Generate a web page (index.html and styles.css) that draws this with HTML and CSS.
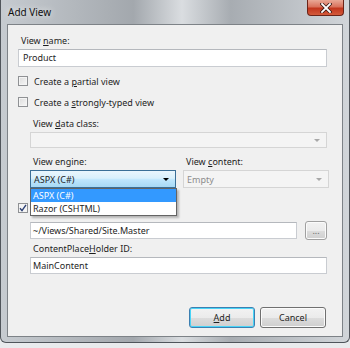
FILE: index.html
```html
<!DOCTYPE html>
<html lang="en">
<head>
    <meta charset="UTF-8">
    <meta name="viewport" content="width=device-width, initial-scale=1.0">
    <title>Add View</title>
    <link rel="stylesheet" href="styles.css">
</head>
<body>
    <div id="window">
        <div id="title-bar">
            <span id="title-text">Add View</span>
            <button id="close-button" aria-label="Close">
                <svg width="12" height="10" viewBox="0 0 12 10">
                    <path d="M2 1 L10 9 M10 1 L2 9" stroke="#3a1a14" stroke-width="3.4" stroke-linecap="square"/>
                    <path d="M2 1 L10 9 M10 1 L2 9" stroke="#ffffff" stroke-width="1.8" stroke-linecap="square"/>
                </svg>
            </button>
        </div>

        <div id="client">
            <label class="field-label first">View <u>n</u>ame:</label>
            <div class="text-box">Product</div>

            <label class="check-row row-partial">
                <span class="check-box"></span>
                <span class="check-text">Create a <u>p</u>artial view</span>
            </label>
            <label class="check-row row-typed">
                <span class="check-box"></span>
                <span class="check-text">Create a <u>s</u>trongly-typed view</span>
            </label>

            <div class="indented">
                <label class="field-label gap-data">View <u>d</u>ata class:</label>
                <div class="combo disabled short"><span></span><span class="arrow grey"></span></div>

                <div class="two-col">
                    <div class="col">
                        <label class="field-label">View engine:</label>
                        <div class="combo focused"><span>ASPX (C#)</span><span class="arrow"></span></div>
                        <ul class="drop-list">
                            <li class="selected">ASPX (C#)</li>
                            <li>Razor (CSHTML)</li>
                        </ul>
                    </div>
                    <div class="col">
                        <label class="field-label">View <u>c</u>ontent:</label>
                        <div class="combo disabled"><span>Empty</span><span class="arrow grey"></span></div>
                    </div>
                </div>
            </div>

            <!-- label of this box is hidden behind the open drop-down -->
            <div class="check-row row-master">
                <span class="check-box checked">
                    <svg width="8" height="8" viewBox="0 0 8 8"><path d="M1 4.2 L3 6.6 L7 0.8" fill="none" stroke="#2b3f74" stroke-width="1.4"/></svg>
                </span>
            </div>

            <div class="indented">
                <div class="master-row">
                    <div class="text-box master">~/Views/Shared/Site.Master</div>
                    <button class="push-button browse">...</button>
                </div>
                <label class="field-label gap-holder">ContentPlace<u>H</u>older ID:</label>
                <div class="text-box small">MainContent</div>
            </div>

            <div id="dialog-buttons">
                <button class="push-button default"><u>A</u>dd</button>
                <button class="push-button">Cancel</button>
            </div>
        </div>
    </div>
</body>
</html>
```

FILE: styles.css
```css
:root {
    --client-bg: #f0f0f0;
    --text-color: #1e1e1e;
    --box-border: #c9ccd1;
    --disabled-text: #8d8d8d;
    --highlight: #3399ff;
}

* {
    box-sizing: border-box;
}

body {
    margin: 0;
    width: 350px;
    height: 348px;
    overflow: hidden;
    background-color: #e9ebed;
    font-family: "Noto Sans", "Open Sans", sans-serif;
    font-size: 9px;
    color: var(--text-color);
}

#window {
    width: 350px;
    height: 343px;
    padding: 0 6px 0 6px;
    border: 1px solid #50555b;
    border-top: none;
    border-radius: 0 0 6px 6px;
    background:
        linear-gradient(90deg, rgba(255, 255, 255, 0) 0%, rgba(120, 125, 131, 0.45) 38%, rgba(255, 255, 255, 0.35) 52%, rgba(110, 115, 121, 0.35) 66%, rgba(255, 255, 255, 0.2) 100%),
        #c6cbd0;
}

#title-bar {
    height: 24px;
    display: flex;
    align-items: center;
    position: relative;
}

#title-text {
    font-size: 10px;
    color: #101010;
    text-shadow: 0 0 6px rgba(255, 255, 255, 0.9);
    padding-left: 1px;
}

#close-button {
    position: absolute;
    top: 0;
    right: -1px;
    width: 37px;
    height: 16px;
    border: 1px solid #6b2418;
    border-top: none;
    border-radius: 0 0 4px 4px;
    background: linear-gradient(#e9a896 0%, #d9725c 45%, #c2361d 55%, #d35a3b 100%);
    display: flex;
    align-items: center;
    justify-content: center;
    padding: 0;
}

#client {
    height: 313px;
    background-color: var(--client-bg);
    border: 1px solid #7d8287;
    padding: 0 15px 0 10px;
    display: flex;
    flex-direction: column;
}

.field-label {
    display: block;
    height: 12px;
    line-height: 12px;
    margin: 0 0 2px 3px;
}

.field-label.first {
    margin-top: 10px;
}

.text-box {
    height: 18px;
    background-color: #ffffff;
    border: 1px solid var(--box-border);
    border-top-color: #b5b8bd;
    padding: 0 4px;
    line-height: 16px;
    white-space: nowrap;
}

.text-box.master,
.text-box.small {
    height: 17px;
    line-height: 15px;
    padding-left: 2px;
}

.check-row {
    height: 14px;
    display: flex;
    align-items: center;
    gap: 6px;
}

.check-text {
    white-space: nowrap;
}

.row-partial { margin-top: 7px; }
.row-typed { margin-top: 7px; }
.row-master { margin-top: 13px; }

.check-box {
    width: 10px;
    height: 10px;
    border: 1px solid #8f9194;
    background: linear-gradient(135deg, #dcdcdc, #f7f7f7);
    box-shadow: inset 0 0 0 1px #f4f4f4;
    display: flex;
    align-items: center;
    justify-content: center;
}

.check-box.checked {
    background: #f4f4f4;
}

.indented {
    padding-left: 12px;
    display: flex;
    flex-direction: column;
}

.gap-data { margin-top: 9px; }
.gap-holder { margin-top: 3px; }

.combo {
    height: 18px;
    border: 1px solid var(--box-border);
    background-color: #ffffff;
    display: flex;
    align-items: center;
    justify-content: space-between;
    padding: 0 6px 0 3px;
}

.combo.short {
    height: 16px;
}

.combo.disabled {
    background-color: #f4f4f4;
    border-color: #d5d5d5;
    color: var(--disabled-text);
}

.combo.focused {
    border-color: #3b6f97;
    background: linear-gradient(#eaf6fd 0%, #d9f0fc 45%, #bee6fd 55%, #a7d9f5 100%);
}

.arrow {
    width: 0;
    height: 0;
    border-left: 3px solid transparent;
    border-right: 3px solid transparent;
    border-top: 3px solid #000000;
}

.arrow.grey {
    border-top-color: #a8a8a8;
}

.two-col {
    display: grid;
    grid-template-columns: 146px 146px;
    column-gap: 7px;
    margin-top: 8px;
}

.col {
    position: relative;
    display: flex;
    flex-direction: column;
}

.drop-list {
    position: absolute;
    top: 32px;
    left: 0;
    width: 147px;
    margin: 0;
    padding: 0;
    list-style: none;
    background-color: #ffffff;
    border: 1px solid #646464;
    box-shadow: 2px 2px 2px rgba(0, 0, 0, 0.25);
    z-index: 2;
}

.drop-list li {
    height: 13px;
    line-height: 13px;
    padding-left: 2px;
}

.drop-list li.selected {
    background-color: var(--highlight);
    color: #ffffff;
}

.master-row {
    display: flex;
    align-items: flex-start;
    gap: 8px;
    margin-top: 6px;
}

.master-row .text-box {
    width: 268px;
    margin-top: 1px;
}

.push-button {
    font-family: inherit;
    font-size: 9px;
    color: var(--text-color);
    border: 1px solid #707070;
    border-radius: 3px;
    background: linear-gradient(#f2f2f2 0%, #ebebeb 50%, #dddddd 51%, #cfcfcf 100%);
    box-shadow: inset 0 0 0 1px #fbfbfb;
    padding: 0;
}

.push-button.browse {
    width: 22px;
    height: 19px;
    color: #6a6a6a;
    border-color: #a0a0a0;
    line-height: 10px;
}

.push-button.default {
    border-color: #3c7fb1;
    box-shadow: inset 0 0 0 1px #48d4f7;
}

#dialog-buttons {
    display: flex;
    justify-content: flex-end;
    gap: 5px;
    margin-top: 33px;
    margin-right: 1px;
}

#dialog-buttons .push-button {
    width: 66px;
    height: 21px;
}
```
